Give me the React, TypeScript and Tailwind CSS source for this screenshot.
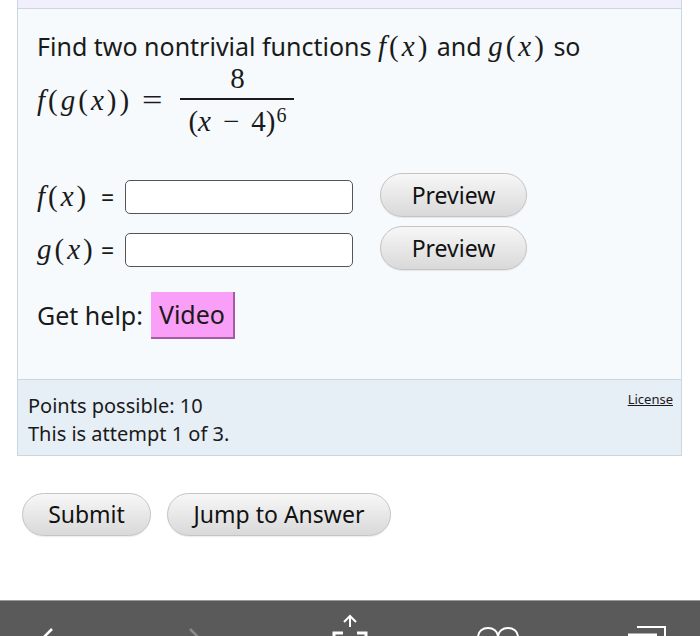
import React from 'react';

const sans = { fontFamily: '"Noto Sans", "Open Sans", sans-serif' };
const serif = { fontFamily: '"Liberation Serif", "Times New Roman", serif' };

const I: React.FC<{ children: React.ReactNode }> = ({ children }) => <span className="italic">{children}</span>;

const Fx: React.FC<{ name: string }> = ({ name }) => (
  <span style={serif} className="text-[29px] leading-none tracking-[3px]">
    <I>{name}</I>(<I>x</I>)
  </span>
);

const PillButton: React.FC<{ label: string; className?: string }> = ({ label, className }) => (
  <button
    className={`rounded-full border border-[#c4c4c4] bg-gradient-to-b from-[#f7f7f7] to-[#d9d9d9] text-[#111] text-[23px] shadow-[0_1px_1px_rgba(0,0,0,0.08)] ${className ?? ''}`}
  >
    {label}
  </button>
);

const AnswerRow: React.FC<{ name: string; shift?: string }> = ({ name, shift }) => (
  <div className={`flex items-center ${shift ?? ''}`}>
    <span className="w-[64px]">
      <Fx name={name} />
    </span>
    <span className="w-[12px] text-[23px]">=</span>
    <input className="ml-[12px] h-[34px] w-[228px] rounded-[5px] border border-[#555] bg-white" />
    <PillButton label="Preview" className="ml-[27px] mt-[-4px] h-[44px] w-[147px]" />
  </div>
);

export default function App() {
  return (
    <div style={sans} className="relative flex h-[636px] w-[700px] flex-col overflow-hidden bg-white text-[#1a1a1a]">
      <div className="ml-[17px] h-[9px] w-[665px] border-x border-b border-[#cbd6e3] bg-[#f1effb]" />

      {/* question body */}
      <div className="ml-[17px] flex h-[370px] w-[665px] flex-col border-x border-[#cbd6e3] bg-[#f6fafd] pl-[19px]">
        <p className="mt-[22px] text-[25px] leading-[30px]">
          Find two nontrivial functions <Fx name="f" /> and <Fx name="g" /> so
        </p>
        <div className="flex items-center" style={serif}>
          <span className="text-[29px] leading-none tracking-[3px]">
            <I>f</I>(<I>g</I>(<I>x</I>))
          </span>
          <span className="ml-[12px] inline-block scale-x-125 text-[29px] leading-none">=</span>
          <div className="ml-[20px] flex flex-col items-center">
            <span className="text-[29px] leading-[34px]">8</span>
            <div className="mt-[3px] h-[2px] w-[114px] bg-[#1a1a1a]" />
            <span className="mt-[3px] text-[29px] leading-[36px]">
              (<I>x</I>
              <span className="mx-[12px]">−</span>4)
              <sup className="relative top-[-9px] ml-[1px] text-[20px]">6</sup>
            </span>
          </div>
        </div>

        <AnswerRow name="f" shift="mt-[38px]" />
        <AnswerRow name="g" shift="mt-[13px]" />

        <div className="mt-[22px] flex items-center text-[25px]">
          <span>Get help:</span>
          <span className="ml-[8px] flex h-[47px] items-center border-b-2 border-r-2 border-[#a55aa5] bg-[#f99ff8] px-[8px]">
            Video
          </span>
        </div>
      </div>

      {/* footer */}
      <div className="ml-[17px] flex h-[77px] w-[665px] justify-between border border-[#cbd6e3] bg-[#e6eef6] pl-[10px] pr-[8px]">
        <div className="mt-[12px] text-[20px] leading-[28px]">
          <div>Points possible: 10</div>
          <div>This is attempt 1 of 3.</div>
        </div>
        <a className="mt-[10px] text-[13px] underline">License</a>
      </div>

      <div className="ml-[22px] mt-[37px] flex gap-[16px]">
        <PillButton label="Submit" className="h-[43px] w-[129px]" />
        <PillButton label="Jump to Answer" className="h-[43px] w-[224px]" />
      </div>

      {/* browser toolbar */}
      <div className="mt-auto h-[36px] w-full border-t border-[#9a9a9a] bg-[#5a5a5a]">
        <svg width="700" height="36" viewBox="0 0 700 36" fill="none" stroke="white" strokeWidth="2.5">
          <path d="M52 28 L40 40" />
          <path d="M190 28 L200 38" stroke="#8a8a8a" />
          <path d="M350 26 V16 M344 21 L350 15 L356 21" strokeWidth="2" />
          <path d="M343 32 H334 V40 M357 32 H366 V40" strokeWidth="3" />
          <path d="M478 36 C478 24 498 24 498 36 M498 36 C498 24 518 24 518 36" strokeWidth="2" />
          <path d="M637 26 H665 V40" strokeWidth="2" />
          <path d="M628 34 H657" strokeWidth="3" />
        </svg>
      </div>
    </div>
  );
}
